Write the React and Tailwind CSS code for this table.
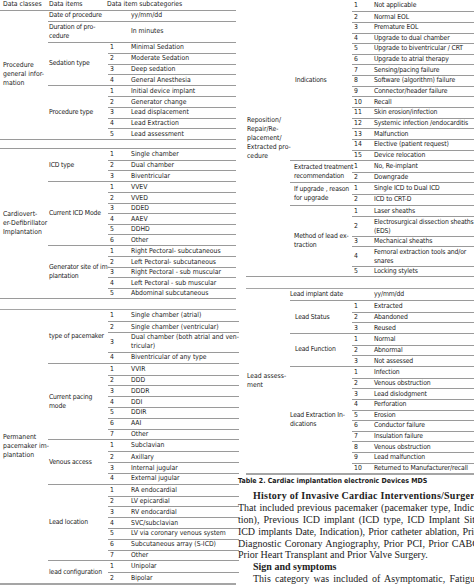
import React from "react";

// tabla izquierda: datos de procedimiento, ICD y marcapasos
const leftSecciones = [
  {
    label: ["Procedure", "general infor-", "mation"],
    h: "h-[10.6px]",
    h2: "h-[19.5px]",
    groups: [
      { item: ["Date of procedure"], rows: [{ n: "", t: ["yy/mm/dd"] }], h: "h-[10.5px]" },
      { item: ["Duration of pro-", "cedure"], rows: [{ n: "", t: ["In minutes"], dbl: true }] },
      {
        item: ["Sedation type"],
        rows: [
          { n: "1", t: ["Minimal Sedation"] },
          { n: "2", t: ["Moderate Sedation"] },
          { n: "3", t: ["Deep sedation"] },
          { n: "4", t: ["General Anesthesia"] },
        ],
      },
      {
        item: ["Procedure type"],
        rows: [
          { n: "1", t: ["Initial device implant"] },
          { n: "2", t: ["Generator change"] },
          { n: "3", t: ["Lead displacement"] },
          { n: "4", t: ["Lead Extraction"] },
          { n: "5", t: ["Lead assessment"] },
        ],
      },
    ],
  },
  {
    label: ["Cardiovert-", "er-Defibrillator", "Implantation"],
    h: "h-[10.5px]",
    h2: "h-[19.5px]",
    groups: [
      {
        item: ["ICD type"],
        rows: [
          { n: "1", t: ["Single chamber"] },
          { n: "2", t: ["Dual chamber"] },
          { n: "3", t: ["Biventricular"] },
        ],
      },
      {
        item: ["Current ICD Mode"],
        rows: [
          { n: "1", t: ["VVEV"] },
          { n: "2", t: ["VVED"] },
          { n: "3", t: ["DDED"] },
          { n: "4", t: ["AAEV"] },
          { n: "5", t: ["DDHD"] },
          { n: "6", t: ["Other"] },
        ],
      },
      {
        item: ["Generator site of im-", "plantation"],
        rows: [
          { n: "1", t: ["Right Pectoral- subcutaneous"] },
          { n: "2", t: ["Left Pectoral- subcutaneous"] },
          { n: "3", t: ["Right Pectoral - sub muscular"] },
          { n: "4", t: ["Left Pectoral - sub muscular"] },
          { n: "5", t: ["Abdominal subcutaneous"] },
        ],
      },
    ],
  },
  {
    label: ["Permanent", "pacemaker im-", "plantation"],
    h: "h-[10.82px]",
    h2: "h-[20px]",
    groups: [
      {
        item: ["type of pacemaker"],
        rows: [
          { n: "1", t: ["Single chamber (atrial)"] },
          { n: "2", t: ["Single chamber (ventricular)"] },
          { n: "3", t: ["Dual chamber (both atrial and ven-", "tricular)"], dbl: true },
          { n: "4", t: ["Biventricular of any type"] },
        ],
      },
      {
        item: ["Current pacing", "mode"],
        rows: [
          { n: "1", t: ["VVIR"] },
          { n: "2", t: ["DDD"] },
          { n: "3", t: ["DDDR"] },
          { n: "4", t: ["DDI"] },
          { n: "5", t: ["DDIR"] },
          { n: "6", t: ["AAI"] },
          { n: "7", t: ["Other"] },
        ],
      },
      {
        item: ["Venous access"],
        rows: [
          { n: "1", t: ["Subclavian"] },
          { n: "2", t: ["Axillary"] },
          { n: "3", t: ["Internal jugular"] },
          { n: "4", t: ["External jugular"] },
        ],
      },
      {
        item: ["Lead location"],
        rows: [
          { n: "1", t: ["RA endocardial"] },
          { n: "2", t: ["LV epicardial"] },
          { n: "3", t: ["RV endocardial"] },
          { n: "4", t: ["SVC/subclavian"] },
          { n: "5", t: ["LV via coronary venous system"] },
          { n: "6", t: ["Subcutaneous array (S-ICD)"] },
          { n: "7", t: ["Other"] },
        ],
      },
      {
        item: ["lead configuration"],
        rows: [
          { n: "1", t: ["Unipolar"] },
          { n: "2", t: ["Bipolar"] },
        ],
      },
    ],
  },
];

// tabla derecha (continuacion)
const rightSecciones = [
  {
    label: ["Reposition/", "Repair/Re-", "placement/", "Extracted pro-", "cedure"],
    h: "h-[10.65px]",
    h2: "h-[19.4px]",
    groups: [
      {
        item: ["Indications"],
        pl: "pl-[5px]",
        rows: [
          { n: "1", t: ["Not applicable"] },
          { n: "2", t: ["Normal EOL"] },
          { n: "3", t: ["Premature EOL"] },
          { n: "4", t: ["Upgrade to dual chamber"] },
          { n: "5", t: ["Upgrade to biventricular / CRT"] },
          { n: "6", t: ["Upgrade to atrial therapy"] },
          { n: "7", t: ["Sensing/pacing failure"] },
          { n: "8", t: ["Software (algorithm) failure"] },
          { n: "9", t: ["Connector/header failure"] },
          { n: "10", t: ["Recall"] },
          { n: "11", t: ["Skin erosion/infection"] },
          { n: "12", t: ["Systemic infection /endocarditis"] },
          { n: "13", t: ["Malfunction"] },
          { n: "14", t: ["Elective (patient request)"] },
          { n: "15", t: ["Device relocation"] },
        ],
      },
      {
        item: ["Extracted treatment", "recommendation"],
        pl: "pl-[4px]",
        rows: [
          { n: "1", t: ["No, Re-implant"] },
          { n: "2", t: ["Downgrade"] },
        ],
      },
      {
        item: ["If upgrade , reason", "for upgrade"],
        pl: "pl-[4px]",
        rows: [
          { n: "1", t: ["Single ICD to Dual ICD"] },
          { n: "2", t: ["ICD to CRT-D"] },
        ],
      },
      {
        item: ["Method of lead ex-", "traction"],
        pl: "pl-[4px]",
        rows: [
          { n: "1", t: ["Laser sheaths"] },
          { n: "2", t: ["Electrosurgical dissection sheaths", "(EDS)"], dbl: true },
          { n: "3", t: ["Mechanical sheaths"] },
          { n: "4", t: ["Femoral extraction tools and/or", "snares"], dbl: true },
          { n: "5", t: ["Locking stylets"] },
        ],
      },
    ],
  },
  {
    label: ["Lead assess-", "ment"],
    h: "h-[10.65px]",
    h2: "h-[19.4px]",
    groups: [
      { item: ["Lead implant date"], pl: "pl-[0px]", rows: [{ n: "", t: ["yy/mm/dd"] }] },
      {
        item: ["Lead Status"],
        pl: "pl-[5px]",
        rows: [
          { n: "1", t: ["Extracted"] },
          { n: "2", t: ["Abandoned"] },
          { n: "3", t: ["Reused"] },
        ],
      },
      {
        item: ["Lead Function"],
        pl: "pl-[5px]",
        rows: [
          { n: "1", t: ["Normal"] },
          { n: "2", t: ["Abnormal"] },
          { n: "3", t: ["Not assessed"] },
        ],
      },
      {
        item: ["Lead Extraction In-", "dications"],
        pl: "pl-[0px]",
        rows: [
          { n: "1", t: ["Infection"] },
          { n: "2", t: ["Venous obstruction"] },
          { n: "3", t: ["Lead dislodgment"] },
          { n: "4", t: ["Perforation"] },
          { n: "5", t: ["Erosion"] },
          { n: "6", t: ["Conductor failure"] },
          { n: "7", t: ["Insulation failure"] },
          { n: "8", t: ["Venous obstruction"] },
          { n: "9", t: ["Lead malfunction"] },
          { n: "10", t: ["Returned to Manufacturer/recall"] },
        ],
      },
    ],
  },
];

const Lineas = ({ lines, extra = "" }) => (
  <div className={`leading-[9px] ${extra}`}>
    {lines.map((l, i) => (
      <div key={i} className="whitespace-nowrap">{l}</div>
    ))}
  </div>
);

function Seccion({ sec, lado, borde }) {
  const izq = lado === "left";
  return (
    <div className={`flex ${borde}`}>
      <div className={`shrink-0 flex items-center ${izq ? "w-[48px] pl-[3px]" : "w-[44px] pl-[1px]"}`}>
        <Lineas lines={sec.label} />
      </div>
      <div className="flex-1 flex flex-col">
        {sec.groups.map((g, gi) => (
          <div key={gi} className={`flex ${gi > 0 ? "border-t border-[#9a9a9a]" : ""}`}>
            <div className={`shrink-0 flex items-center ${izq ? "w-[60px] pl-[1px]" : `w-[62px] ${g.pl}`}`}>
              <Lineas lines={g.item} extra="tracking-[-0.15px]" />
            </div>
            <div className="flex-1 flex flex-col">
              {g.rows.map((r, ri) => (
                <div
                  key={ri}
                  className={`flex items-center ${r.dbl ? sec.h2 : g.h || sec.h} ${ri > 0 ? "border-t border-[#9a9a9a]" : ""}`}
                >
                  <div className={`shrink-0 pl-[2px] leading-[9px] ${izq ? "w-[23px]" : "w-[22px]"}`}>{r.n}</div>
                  <Lineas lines={r.t} extra={izq ? "" : "tracking-[-0.12px]"} />
                </div>
              ))}
            </div>
          </div>
        ))}
      </div>
    </div>
  );
}

export default function App() {
  const linea = "whitespace-nowrap text-justify [text-align-last:justify]";
  return (
    <div className="w-[474px] h-[585px] overflow-hidden bg-white flex text-[#1a1a1a]">
      {/* columna izquierda */}
      <div className="w-[236px] shrink-0 text-[6.8px] font-['DejaVu_Sans_Condensed','Liberation_Sans',sans-serif]">
        <div className="flex items-center h-[10.5px] border-b border-[#9a9a9a] whitespace-nowrap leading-[9px]">
          <div className="w-[48px] pl-[3px]">Data classes</div>
          <div className="w-[59px] pl-[1px]">Data items</div>
          <div>Data item subcategories</div>
        </div>
        <Seccion sec={leftSecciones[0]} lado="left" borde="" />
        <div className="h-[9.5px] border-t border-[#9a9a9a]"></div>
        <Seccion sec={leftSecciones[1]} lado="left" borde="border-t border-[#9a9a9a]" />
        <div className="h-[11px] border-t border-[#9a9a9a]"></div>
        <Seccion sec={leftSecciones[2]} lado="left" borde="border-t border-b-2 border-[#a5a5a5]" />
      </div>

      {/* columna derecha */}
      <div className="w-[238px] shrink-0">
        <div className="pl-[10px] pt-[0.6px] text-[6.8px] font-['DejaVu_Sans_Condensed','Liberation_Sans',sans-serif]">
          <div className="w-[260px]">
            <Seccion sec={rightSecciones[0]} lado="right" borde="" />
            <div className="h-[12px] border-t border-[#9a9a9a]"></div>
            <Seccion sec={rightSecciones[1]} lado="right" borde="border-t border-b-2 border-[#a5a5a5]" />
          </div>
        </div>
        <div className="mt-[2px] pl-[2px] text-[7px] leading-[9px] font-bold whitespace-nowrap font-['DejaVu_Sans_Condensed','Liberation_Sans',sans-serif]">
          Table 2. Cardiac implantation electronic Devices MDS
        </div>
        <div className="mt-[4px] pl-[2px] w-[246px] text-[10px] leading-[11.8px] text-[#222] font-['Liberation_Serif',serif]">
          <div className="pl-[15px] font-bold whitespace-nowrap tracking-[0.25px]">
            History of Invasive Cardiac Interventions/Surgery:
          </div>
          <div className={linea}>That included previous pacemaker (pacemaker type, Indica-</div>
          <div className={linea}>tion), Previous ICD implant (ICD type, ICD Implant Site,</div>
          <div className={`${linea} tracking-[-0.1px]`}>ICD implants Date, Indication), Prior catheter ablation, Prior</div>
          <div className={linea}>Diagnostic Coronary Angiography, Prior PCI, Prior CABG,</div>
          <div className="whitespace-nowrap">Prior Heart Transplant and Prior Valve Surgery.</div>
          <div className="pl-[15px] font-bold">Sign and symptoms</div>
          <div className={`pl-[15px] ${linea}`}>This category was included of Asymptomatic, Fatigue,</div>
        </div>
      </div>
    </div>
  );
}
